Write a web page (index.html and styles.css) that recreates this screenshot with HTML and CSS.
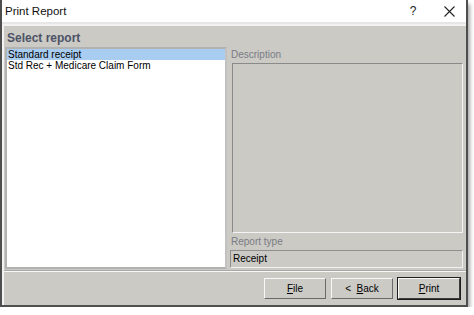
FILE: index.html
```html
<!DOCTYPE html>
<html lang="en">
<head>
    <meta charset="UTF-8">
    <title>Print Report</title>
    <link rel="stylesheet" href="styles.css">
</head>
<body>
    <div class="window">
        <div class="title-bar">
            <span class="title">Print Report</span>
            <div class="title-btns">
                <span class="tbtn">?</span>
                <span class="tbtn close">
                    <svg width="11" height="11" viewBox="0 0 11 11"><path d="M0.5 0.5L10.5 10.5M10.5 0.5L0.5 10.5" stroke="#222" stroke-width="1.1" fill="none"/></svg>
                </span>
            </div>
        </div>
        <div class="content">
            <div class="main">
                <div class="heading">Select report</div>
                <div class="columns">
                    <div class="list">
                        <div class="item selected">Standard receipt</div>
                        <div class="item">Std Rec + Medicare Claim Form</div>
                    </div>
                    <div class="side">
                        <div class="label">Description</div>
                        <div class="desc-box"></div>
                        <div class="label type-label">Report type</div>
                        <div class="field">Receipt</div>
                    </div>
                </div>
            </div>
            <div class="footer">
                <button class="btn"><u>F</u>ile</button>
                <button class="btn">&lt;&nbsp;&nbsp;<u>B</u>ack</button>
                <button class="btn default"><u>P</u>rint</button>
            </div>
        </div>
    </div>
</body>
</html>
```

FILE: styles.css
```css
body {
    margin: 0;
    background: #ffffff;
    font-family: "Liberation Sans", Arial, sans-serif;
    font-size: 10px;
    color: #000;
}
.window {
    width: 464px;
    height: 305px;
    border: 2px solid #4e4e4e;
    border-top: none;
    background: #f2f2f2;
    box-shadow: 2px 4px 4px rgba(0,0,0,0.35);
    display: flex;
    flex-direction: column;
}
.title-bar {
    height: 22px;
    background: #ffffff;
    display: flex;
    align-items: center;
    justify-content: space-between;
    padding-left: 3px;
    border-bottom: 2px solid #e6e6e6;
}
.title {
    font-size: 11.5px;
    color: #111;
}
.title-btns {
    display: flex;
    height: 100%;
}
.tbtn {
    width: 38px;
    display: flex;
    align-items: center;
    justify-content: center;
    font-size: 12px;
    color: #222;
}
.tbtn.close {
    width: 34px;
}
.content {
    flex: 1;
    margin: 2px 0 0 2px;
    background: #cbcac5;
    display: flex;
    flex-direction: column;
}
.main {
    padding: 5px 3px 0 1px;
}
.heading {
    font-weight: bold;
    font-size: 12px;
    color: #4d5366;
    padding-left: 2px;
    height: 16px;
}
.columns {
    display: flex;
    gap: 3px;
}
.list {
    width: 218px;
    height: 218px;
    background: #fff;
    border: 2px solid #b2b2b2;
    border-right-color: #c2c2c2;
}
.item {
    height: 11px;
    line-height: 11px;
    padding-left: 1px;
    white-space: nowrap;
}
.item.selected {
    background: #a9cdf1;
}
.side {
    flex: 1;
    display: flex;
    flex-direction: column;
    padding-top: 3px;
}
.label {
    color: #7a7c84;
    font-size: 10px;
    height: 10px;
    line-height: 10px;
    padding-left: 1px;
}
.desc-box {
    margin: 3px 0 0 2px;
    height: 168px;
    border: 1px solid #8a8a8a;
    border-right-color: #f4f4f4;
    border-bottom-color: #f4f4f4;
}
.type-label {
    margin-top: 4px;
}
.field {
    margin-top: 3px;
    height: 16px;
    line-height: 16px;
    border: 1px solid #8f8f8f;
    border-right-color: #f2f2f2;
    border-bottom-color: #f2f2f2;
    padding-left: 2px;
}
.footer {
    margin-top: 1px;
    border-top: 1px solid #a9a9a9;
    box-shadow: inset 0 1px 0 #f7f7f7;
    flex: 1;
    display: flex;
    justify-content: flex-end;
    gap: 5px;
    padding: 7px 6px 0 0;
}
.btn {
    width: 62px;
    height: 21px;
    font-family: "Liberation Sans", Arial, sans-serif;
    font-size: 10px;
    color: #000;
    background: #cbcac5;
    border: 1px solid;
    border-color: #f8f8f8 #6a6a6a #6a6a6a #f8f8f8;
    padding: 0;
}
.btn.default {
    outline: 1px solid #1e1e1e;
    outline-offset: 0;
    border-color: #f8f8f8 #3a3a3a #3a3a3a #f8f8f8;
}
```
